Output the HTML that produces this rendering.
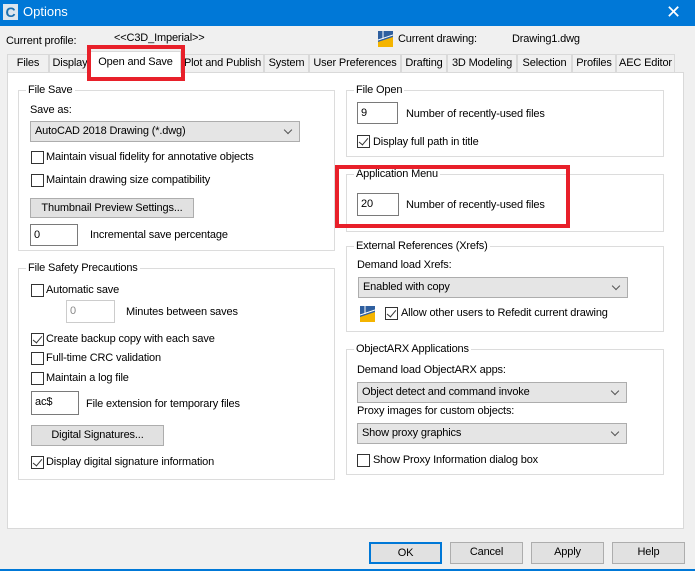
<!DOCTYPE html>
<html><head><style>
*{box-sizing:border-box;margin:0;padding:0}
body{width:695px;height:571px;background:#f0f0f0;font-family:"Liberation Sans",sans-serif;font-size:11px;letter-spacing:-0.15px;color:#000;position:relative;overflow:hidden}
.a{position:absolute;white-space:nowrap}
.t{position:absolute;white-space:nowrap;line-height:14px}
.grp{position:absolute;border:1px solid #dcdcdc}
.gl{position:absolute;top:-8px;left:7px;background:#fff;padding:0 2px;line-height:14px;white-space:nowrap}
.cb{position:absolute;width:13px;height:13px;border:1px solid #333;background:#fff}
.cb.c::after{content:"";position:absolute;left:3px;top:0px;width:4px;height:8px;border:solid #333;border-width:0 1px 1px 0;transform:rotate(40deg)}
.in{position:absolute;border:1px solid #7a7a7a;background:#fff;padding:3px 3px;line-height:14px}
.combo{position:absolute;border:1px solid #adadad;background:#e5e5e5;padding:0 4px;line-height:19px;white-space:nowrap}
.combo::after{content:"";position:absolute;right:8px;top:5px;width:5px;height:5px;border:solid #555;border-width:0 1px 1px 0;transform:rotate(45deg)}
.btn{position:absolute;border:1px solid #adadad;background:#e1e1e1;text-align:center;line-height:19px;white-space:nowrap}
.tab{position:absolute;top:54px;height:18px;border:1px solid #d9d9d9;border-bottom:none;background:#f0f0f0;text-align:center;line-height:17px;white-space:nowrap;overflow:hidden}
.red{position:absolute;border:4px solid #e8202a}
</style></head><body>
<div class="a" style="left:0;top:0;width:695px;height:26px;background:#0078d7"></div>
<div class="a" style="left:3px;top:4px;width:15px;height:16px;background:#dde6ee;color:#1a6fb0;font-weight:bold;font-size:14px;line-height:16px;text-align:center">C</div>
<div class="t" style="left:23px;top:4px;color:#fff;font-size:13px;line-height:16px;letter-spacing:0">Options</div>
<div class="t" style="left:666px;top:3px;color:#fff;font-size:18px;line-height:18px">✕</div>

<div class="t" style="left:6px;top:34px">Current profile:</div>
<div class="t" style="left:114px;top:31px">&lt;&lt;C3D_Imperial&gt;&gt;</div>
<svg class="a" style="left:378px;top:31px" width="15" height="16"><rect width="15" height="16" fill="#2f5f9f"/><path d="M0 11 L15 6 L15 16 L0 16Z" fill="#f4b400"/><path d="M0 9 L15 4" stroke="#fff"/><path d="M5 0V8" stroke="#fff"/></svg>
<div class="t" style="left:398px;top:32px">Current drawing:</div>
<div class="t" style="left:512px;top:32px">Drawing1.dwg</div>

<div class="a" style="left:7px;top:72px;width:677px;height:457px;background:#fff;border:1px solid #d9d9d9"></div>
<div class="tab" style="left:7px;width:42px">Files</div>
<div class="tab" style="left:49px;width:42px">Display</div>
<div class="tab" style="left:181px;width:83px">Plot and Publish</div>
<div class="tab" style="left:264px;width:45px">System</div>
<div class="tab" style="left:309px;width:92px">User Preferences</div>
<div class="tab" style="left:401px;width:46px">Drafting</div>
<div class="tab" style="left:447px;width:70px">3D Modeling</div>
<div class="tab" style="left:517px;width:55px">Selection</div>
<div class="tab" style="left:572px;width:44px">Profiles</div>
<div class="tab" style="left:616px;width:59px">AEC Editor</div>
<div class="tab" style="left:90px;top:51px;width:91px;height:22px;background:#fff;line-height:20px">Open and Save</div>
<div class="red" style="left:87px;top:45px;width:98px;height:36px"></div>

<div class="grp" style="left:18px;top:90px;width:317px;height:161px"><div class="gl">File Save</div></div>
<div class="t" style="left:30px;top:103px">Save as:</div>
<div class="combo" style="left:30px;top:121px;width:270px;height:21px">AutoCAD 2018 Drawing (*.dwg)</div>
<div class="cb" style="left:31px;top:151px"></div><div class="t" style="left:46px;top:150px">Maintain visual fidelity for annotative objects</div>
<div class="cb" style="left:31px;top:174px"></div><div class="t" style="left:46px;top:173px">Maintain drawing size compatibility</div>
<div class="btn" style="left:30px;top:198px;width:164px;height:20px">Thumbnail Preview Settings...</div>
<div class="in" style="left:30px;top:224px;width:48px;height:22px">0</div>
<div class="t" style="left:90px;top:228px">Incremental save percentage</div>

<div class="grp" style="left:18px;top:268px;width:317px;height:212px"><div class="gl">File Safety Precautions</div></div>
<div class="cb" style="left:31px;top:284px"></div><div class="t" style="left:46px;top:283px">Automatic save</div>
<div class="in" style="left:66px;top:300px;width:49px;height:23px;border-color:#ccc;color:#888">0</div>
<div class="t" style="left:126px;top:305px">Minutes between saves</div>
<div class="cb c" style="left:31px;top:333px"></div><div class="t" style="left:46px;top:332px">Create backup copy with each save</div>
<div class="cb" style="left:31px;top:352px"></div><div class="t" style="left:46px;top:351px">Full-time CRC validation</div>
<div class="cb" style="left:31px;top:372px"></div><div class="t" style="left:46px;top:371px">Maintain a log file</div>
<div class="in" style="left:31px;top:391px;width:48px;height:24px">ac$</div>
<div class="t" style="left:86px;top:397px">File extension for temporary files</div>
<div class="btn" style="left:31px;top:425px;width:133px;height:21px">Digital Signatures...</div>
<div class="cb c" style="left:31px;top:456px"></div><div class="t" style="left:46px;top:455px">Display digital signature information</div>

<div class="grp" style="left:346px;top:90px;width:318px;height:67px"><div class="gl">File Open</div></div>
<div class="in" style="left:357px;top:102px;width:41px;height:22px">9</div>
<div class="t" style="left:406px;top:107px">Number of recently-used files</div>
<div class="cb c" style="left:357px;top:135px"></div><div class="t" style="left:373px;top:135px">Display full path in title</div>

<div class="grp" style="left:346px;top:174px;width:318px;height:58px"><div class="gl">Application Menu</div></div>
<div class="in" style="left:357px;top:193px;width:42px;height:23px">20</div>
<div class="t" style="left:406px;top:198px">Number of recently-used files</div>
<div class="red" style="left:335px;top:165px;width:235px;height:63px"></div>

<div class="grp" style="left:346px;top:246px;width:318px;height:86px"><div class="gl">External References (Xrefs)</div></div>
<div class="t" style="left:357px;top:258px">Demand load Xrefs:</div>
<div class="combo" style="left:358px;top:277px;width:270px;height:21px">Enabled with copy</div>
<svg class="a" style="left:360px;top:306px" width="15" height="16"><rect width="15" height="16" fill="#2f5f9f"/><path d="M0 11 L15 6 L15 16 L0 16Z" fill="#f4b400"/><path d="M0 9 L15 4" stroke="#fff"/><path d="M5 0V8" stroke="#fff"/></svg>
<div class="cb c" style="left:385px;top:307px"></div><div class="t" style="left:401px;top:306px">Allow other users to Refedit current drawing</div>

<div class="grp" style="left:346px;top:349px;width:318px;height:126px"><div class="gl">ObjectARX Applications</div></div>
<div class="t" style="left:357px;top:363px">Demand load ObjectARX apps:</div>
<div class="combo" style="left:357px;top:382px;width:270px;height:21px">Object detect and command invoke</div>
<div class="t" style="left:357px;top:404px">Proxy images for custom objects:</div>
<div class="combo" style="left:357px;top:423px;width:270px;height:21px">Show proxy graphics</div>
<div class="cb" style="left:357px;top:454px"></div><div class="t" style="left:373px;top:453px">Show Proxy Information dialog box</div>

<div class="btn" style="left:369px;top:542px;width:73px;height:22px;border:2px solid #0078d7;line-height:18px">OK</div>
<div class="btn" style="left:450px;top:542px;width:73px;height:22px">Cancel</div>
<div class="btn" style="left:531px;top:542px;width:73px;height:22px">Apply</div>
<div class="btn" style="left:612px;top:542px;width:73px;height:22px">Help</div>
<div class="a" style="left:0;top:569px;width:695px;height:2px;background:#0078d7"></div>
</body></html>
